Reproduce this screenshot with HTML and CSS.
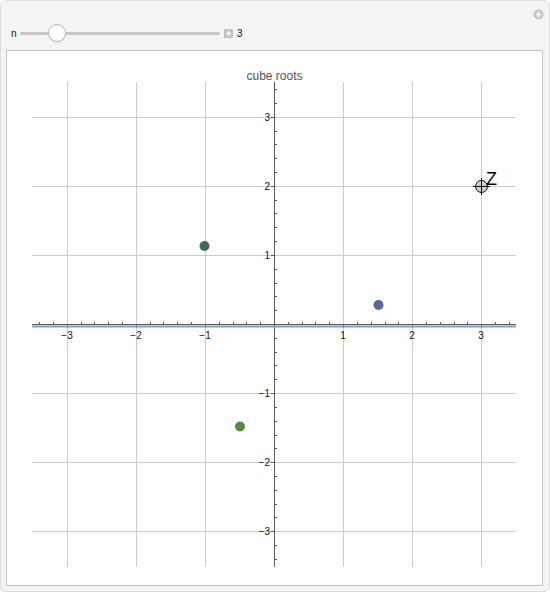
FILE: index.html
```html
<!DOCTYPE html>
<html>
<head>
<meta charset="utf-8">
<link rel="stylesheet" href="styles.css">
</head>
<body>
<div class="panel">
  <div class="close" aria-label="close">
    <svg width="11" height="11" viewBox="0 0 11 11"><circle cx="5.5" cy="5.5" r="5" fill="#c6c6c6"/><path d="M5.5 2.8v5.4M2.8 5.5h5.4" stroke="#fff" stroke-width="1.6"/></svg>
  </div>
  <div class="controls">
    <span class="label">n</span>
    <div class="slider">
      <div class="track"></div>
      <div class="thumb"></div>
    </div>
    <svg class="plus" width="9" height="9" viewBox="0 0 9 9"><rect x="0" y="0" width="9" height="9" rx="1" fill="#c3c3c3"/><path d="M4.5 2v5M2 4.5h5" stroke="#fff" stroke-width="1.4"/></svg>
    <span class="value">3</span>
  </div>
  <div class="plot">
    <svg class="chart" width="535" height="534" viewBox="0 0 535 534">
      <g transform="translate(-7 -51)">
        <text class="title" x="274.5" y="80" text-anchor="middle">cube roots</text>
        <g class="grid">
          <path d="M67.5 82V567M136.5 82V567M205.5 82V567M343.5 82V567M412.5 82V567M481.5 82V567"/>
          <path d="M32 117.5H516M32 186.5H516M32 255.5H516M32 393.5H516M32 462.5H516M32 531.5H516"/>
        </g>
        <g class="axis">
          <path d="M274.5 82V567"/>
          <path d="M32 324.5H516"/>
          <path class="ticks" d="M39.5 322V324M53.5 322V324M81.5 322V324M94.5 322V324M108.5 322V324M122.5 322V324M150.5 322V324M163.5 322V324M177.5 322V324M191.5 322V324M219.5 322V324M233.5 322V324M246.5 322V324M260.5 322V324M288.5 322V324M302.5 322V324M315.5 322V324M329.5 322V324M357.5 322V324M371.5 322V324M385.5 322V324M398.5 322V324M426.5 322V324M440.5 322V324M454.5 322V324M467.5 322V324M495.5 322V324M509.5 322V324"/>
          <path class="ticks" d="M275 89.5H277M275 103.5H277M275 131.5H277M275 144.5H277M275 158.5H277M275 172.5H277M275 200.5H277M275 213.5H277M275 227.5H277M275 241.5H277M275 269.5H277M275 283.5H277M275 296.5H277M275 310.5H277M275 338.5H277M275 352.5H277M275 365.5H277M275 379.5H277M275 407.5H277M275 421.5H277M275 435.5H277M275 448.5H277M275 476.5H277M275 490.5H277M275 504.5H277M275 517.5H277M275 545.5H277M275 559.5H277"/>
          <path class="ticks" d="M271 117.5H274M271 186.5H274M271 255.5H274M271 393.5H274M271 462.5H274M271 531.5H274"/>
          <path class="ticks" d="M67.5 325V328M136.5 325V328M205.5 325V328M343.5 325V328M412.5 325V328M481.5 325V328"/>
        </g>
        <path class="realline" d="M32 326.5H516"/>
        <g class="labels">
          <text x="67" y="339" text-anchor="middle">−3</text>
          <text x="136" y="339" text-anchor="middle">−2</text>
          <text x="205" y="339" text-anchor="middle">−1</text>
          <text x="343" y="339" text-anchor="middle">1</text>
          <text x="412" y="339" text-anchor="middle">2</text>
          <text x="481" y="339" text-anchor="middle">3</text>
          <text x="270" y="121" text-anchor="end">3</text>
          <text x="270" y="190" text-anchor="end">2</text>
          <text x="270" y="259" text-anchor="end">1</text>
          <text x="270" y="397" text-anchor="end">−1</text>
          <text x="270" y="466" text-anchor="end">−2</text>
          <text x="270" y="535" text-anchor="end">−3</text>
        </g>
        <circle cx="378.5" cy="305" r="5" fill="#55699c"/>
        <circle cx="204.5" cy="246" r="5" fill="#3f6b56"/>
        <circle cx="240" cy="426.5" r="5" fill="#5a8642"/>
        <g class="locator">
          <circle cx="481.5" cy="186.5" r="6" fill="#cfcfcf" stroke="#111" stroke-width="1"/>
          <path d="M481.5 178V195M473 186.5H490" stroke="#111" stroke-width="1"/>
          <text class="zlabel" x="486" y="185">Z</text>
        </g>
      </g>
    </svg>
  </div>
</div>
</body>
</html>
```

FILE: styles.css
```css
html, body {
  margin: 0;
  padding: 0;
  background: #ffffff;
}

body {
  font-family: "Liberation Sans", Arial, sans-serif;
}

.panel {
  position: relative;
  box-sizing: border-box;
  width: 550px;
  height: 592px;
  border: 1px solid #dedede;
  border-radius: 6px;
  background: #f5f5f5;
  padding: 22px 6px 0 5px;
}

.close {
  position: absolute;
  top: 8px;
  right: 5px;
  width: 11px;
  height: 11px;
}

.close svg {
  display: block;
}

.controls {
  height: 20px;
  display: flex;
  align-items: center;
  padding-left: 5px;
  margin-bottom: 7px;
  font-size: 10px;
  color: #111;
}

.label {
  width: 9px;
}

.slider {
  position: relative;
  width: 200px;
  height: 20px;
  display: flex;
  align-items: center;
}

.track {
  width: 200px;
  height: 3px;
  border-radius: 2px;
  background: #c6c6c6;
}

.thumb {
  position: absolute;
  left: 28px;
  top: 1px;
  box-sizing: border-box;
  width: 18px;
  height: 18px;
  border-radius: 50%;
  background: #ffffff;
  border: 1px solid #b8b8b8;
  box-shadow: 0 1px 1px rgba(0, 0, 0, 0.08);
}

.plus {
  display: block;
  margin-left: 4px;
}

.value {
  margin-left: 4px;
}

.plot {
  width: 537px;
  height: 536px;
  box-sizing: border-box;
  border: 1px solid #c2c2c2;
  background: #ffffff;
}

.chart {
  display: block;
}

.title {
  font-family: "Liberation Sans", Arial, sans-serif;
  font-size: 12px;
  fill: #555555;
}

.grid path {
  stroke: #cccccc;
  stroke-width: 1;
  fill: none;
}

.axis path {
  stroke: #5a5a5a;
  stroke-width: 1;
  fill: none;
}

.realline {
  stroke: #7b9fd2;
  stroke-width: 2;
  fill: none;
}

.labels text {
  font-family: "Liberation Sans", Arial, sans-serif;
  font-size: 10px;
  fill: #111111;
}

.zlabel {
  font-family: "Liberation Sans", Arial, sans-serif;
  font-size: 18px;
  fill: #000000;
}
```
